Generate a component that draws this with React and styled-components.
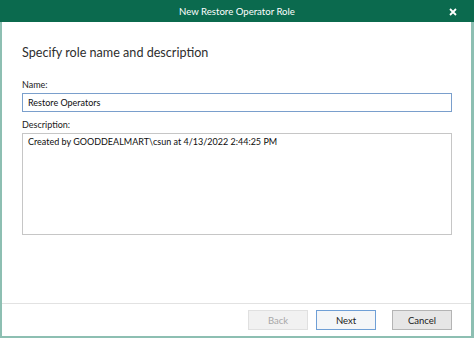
import React from "react";
import styled, { createGlobalStyle } from "styled-components";

const Global = createGlobalStyle`
  html, body { margin: 0; padding: 0; background: #ffffff; }
  * { box-sizing: border-box; }
`;

const FONT = `"Lato", "Open Sans", "Liberation Sans", sans-serif`;

const Window = styled.div`
  width: 474px;
  height: 338px;
  display: flex;
  flex-direction: column;
  font-family: ${FONT};
  color: #1e1e1e;
  background: #ffffff;
`;

const TitleBar = styled.div`
  height: 22px;
  flex: none;
  background: #0b6a4e;
  display: flex;
  align-items: center;
  justify-content: center;
  position: relative;
  color: #ffffff;
  font-size: 9.6px;
  padding-top: 1px;
`;

const CloseButton = styled.button`
  position: absolute;
  left: 449px;
  top: 8px;
  width: 8px;
  height: 8px;
  padding: 0;
  border: 0;
  background: transparent;
  display: flex;
  align-items: center;
  justify-content: center;
`;

const Body = styled.div`
  flex: 1;
  display: flex;
  flex-direction: column;
  border-left: 2px solid #8dbfb2;
  border-right: 3px solid #8dbfb2;
  border-bottom: 2px solid #8dbfb2;
  min-height: 0;
`;

const Content = styled.div`
  flex: 1;
  padding: 21px 19px 0 20px;
  display: flex;
  flex-direction: column;
`;

const Heading = styled.div`
  font-size: 12.6px;
  line-height: 20px;
  color: #2e2e2e;
  margin-bottom: 15px;
`;

const Label = styled.label`
  display: block;
  font-size: 9px;
  line-height: 14px;
  color: #1a1a1a;
  margin-bottom: 1px;
`;

const Field = styled.div`
  height: ${(p) => p.$h}px;
  border: 1px solid ${(p) => (p.$focused ? "#7a9fcc" : "#c6c6c6")};
  background: #ffffff;
  padding: ${(p) => (p.$multi ? "1px 5px" : "0 5px")};
  display: flex;
  align-items: ${(p) => (p.$multi ? "flex-start" : "center")};
  font-size: 9px;
  line-height: 14px;
  color: #0e0e0e;
  margin-bottom: ${(p) => p.$mb || 0}px;
`;

const Footer = styled.div`
  flex: none;
  border-top: 1px solid #e2e2e2;
  padding: 6px 19px 6px 0;
  display: flex;
  justify-content: flex-end;
  align-items: center;
`;

const Button = styled.button`
  width: 60px;
  height: 20px;
  margin-left: ${(p) => p.$ml || 0}px;
  font-family: ${FONT};
  font-size: 9.5px;
  padding: 0;
  border: 1px solid
    ${(p) => (p.$variant === "primary" ? "#6f9fd6" : p.$variant === "disabled" ? "#e0e0e0" : "#b4b4b4")};
  background: ${(p) => (p.$variant === "primary" ? "#f4f6f8" : p.$variant === "disabled" ? "#f1f1f1" : "#e6e6e6")};
  color: ${(p) => (p.$variant === "disabled" ? "#a8a8a8" : "#1a1a1a")};
`;

export default function App() {
  return (
    <>
      <Global />
      <Window>
        <TitleBar>
          New Restore Operator Role
          <CloseButton aria-label="Close">
            <svg width="8" height="8" viewBox="0 0 8 8">
              <path d="M1 1 L7 7 M7 1 L1 7" stroke="#ffffff" strokeWidth="1.8" />
            </svg>
          </CloseButton>
        </TitleBar>
        <Body>
          <Content>
            <Heading>Specify role name and description</Heading>
            <Label>Name:</Label>
            <Field $h={19} $focused $mb={6}>Restore Operators</Field>
            <Label>Description:</Label>
            <Field $h={102} $multi>Created by GOODDEALMART\csun at 4/13/2022 2:44:25 PM</Field>
          </Content>
          <Footer>
            <Button $variant="disabled">Back</Button>
            <Button $variant="primary" $ml={8}>Next</Button>
            <Button $ml={16}>Cancel</Button>
          </Footer>
        </Body>
      </Window>
    </>
  );
}
